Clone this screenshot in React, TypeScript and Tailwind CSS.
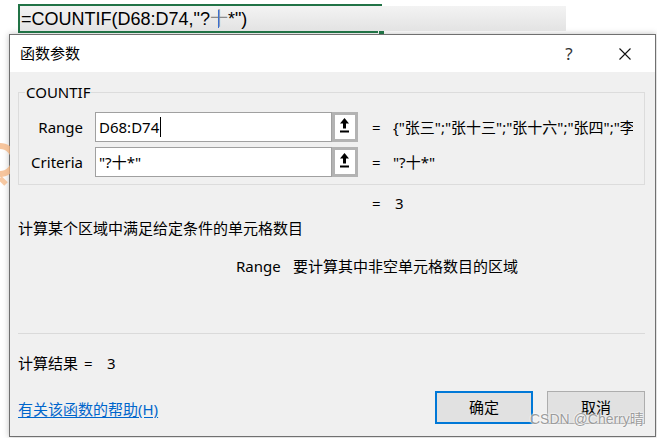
import React from "react";

function UpArrow() {
  return (
    <svg width="9" height="15" viewBox="0 0 9 15" className="block">
      <polygon points="4.5,0 9,5.5 6,5.5 6,10.5 3,10.5 3,5.5 0,5.5" fill="#000" />
      <rect x="0" y="12.5" width="9" height="2" fill="#000" />
    </svg>
  );
}

function RefButton() {
  return (
    <div className="w-[26px] h-[30px] border-[3px] border-[#b3b3b3] bg-white flex items-center justify-center pr-[2px] pb-[4px]">
      <UpArrow />
    </div>
  );
}

export default function App() {
  return (
    <div className="relative w-[657px] h-[438px] bg-white overflow-hidden text-black text-[15px] font-['Noto_Sans','Noto_Sans_CJK_SC',sans-serif]">
      {/* orange watermark fragment on the left */}
      <svg className="absolute left-0 top-[140px]" width="10" height="50" viewBox="0 0 10 50">
        <path d="M0 6 A 12 12 0 0 1 0 34" stroke="#f3b27c" strokeWidth="6" fill="none" opacity="0.75" />
        <path d="M0 38 L6 44" stroke="#f3b27c" strokeWidth="5" fill="none" opacity="0.7" />
      </svg>

      {/* Excel formula bar */}
      <div className="h-[34px] pl-[18px] pt-[4px]">
        <div className="flex flex-col border-l-2 border-[#217346] w-[548px]">
          <div className="h-[2px] w-[362px] bg-[#217346]" />
          <div className="h-[25px] w-[546px] bg-gradient-to-b from-[#f3f3f3] to-[#e3e3e3] flex items-center pl-[1px] text-[18px] leading-none font-['Liberation_Sans','Noto_Sans_CJK_SC',sans-serif]">
            <span>=COUNTIF(D68:D74,"?</span>
            <span className="relative text-[#8a8a8a]">
              十
              <span className="absolute left-[8px] top-[0px] bottom-[0px] w-px bg-[#3a6fd0]" />
            </span>
            <span>*")</span>
          </div>
          <div className="flex h-[2px]">
            <div className="w-[358px] bg-[#217346]" />
            <div className="w-[5px] h-[3px] ml-[1px] bg-[#217346]" />
          </div>
        </div>
      </div>

      {/* Dialog */}
      <div className="ml-[9px] w-[647px] h-[403px] border border-[#707070] bg-[#f0f0f0] flex flex-col shadow-[0_0_6px_rgba(0,0,0,0.25)]">
        {/* title bar */}
        <div className="h-[37px] bg-white flex items-center pl-[10px] shrink-0">
          <span className="text-[15px]">函数参数</span>
          <span className="ml-auto w-[16px] text-center text-[17px] text-[#333]">?</span>
          <svg className="ml-[42px] mr-[24px]" width="12" height="12" viewBox="0 0 12 12">
            <path d="M0.5 0.5 L11.5 11.5 M11.5 0.5 L0.5 11.5" stroke="#111" strokeWidth="1.1" />
          </svg>
        </div>

        {/* body */}
        <div className="flex flex-col pl-[8px] pr-[10px]">
          {/* group box */}
          <div className="relative mt-[20px] h-[93px] border border-[#dcdcdc] pt-[19px]">
            <span className="absolute left-[6px] top-[-11px] px-[1px] leading-[20px] bg-[#f0f0f0]">COUNTIF</span>

            <div className="flex items-center h-[30px]">
              <span className="w-[64px] text-right">Range</span>
              <div className="ml-[12px] w-[237px] h-[30px] border border-[#a0a0a0] bg-white pl-[3px] flex items-center">
                <span>D68:D74</span>
                <span className="w-px h-[20px] bg-black ml-[1px]" />
              </div>
              <RefButton />
              <span className="ml-[14px] w-[21px]">=</span>
              <span className="w-[240px] overflow-hidden whitespace-nowrap">{'{"张三";"张十三";"张十六";"张四";"李四"}'}</span>
            </div>

            <div className="flex items-center h-[30px] mt-[5px]">
              <span className="w-[64px] text-right">Criteria</span>
              <div className="ml-[12px] w-[237px] h-[30px] border border-[#a0a0a0] bg-white pl-[3px] flex items-center">
                <span>"?十*"</span>
              </div>
              <RefButton />
              <span className="ml-[14px] w-[21px]">=</span>
              <span className="whitespace-nowrap">"?十*"</span>
            </div>
          </div>

          <div className="flex items-center h-[20px] mt-[8px]">
            <span className="ml-[354px] w-[23px]">=</span>
            <span>3</span>
          </div>

          <div className="flex items-center h-[20px] mt-[5px]">
            <span>计算某个区域中满足给定条件的单元格数目</span>
          </div>

          <div className="flex items-center h-[20px] mt-[18px]">
            <span className="ml-[218px] w-[57px]">Range</span>
            <span>要计算其中非空单元格数目的区域</span>
          </div>

          <div className="mt-[57px] h-px bg-[#dadada]" />

          <div className="flex items-center h-[20px] mt-[19px]">
            <span className="w-[66px]">计算结果</span>
            <span className="w-[23px]">=</span>
            <span>3</span>
          </div>

          <div className="flex items-center h-[33px] mt-[18px]">
            <span className="mt-[3px] text-[#0066cc] underline underline-offset-[2px]">有关该函数的帮助(H)</span>
            <button className="ml-auto w-[98px] h-[33px] border-2 border-[#0078d7] bg-[#e1e1e1] flex items-center justify-center text-[15px]">
              确定
            </button>
            <button className="ml-[14px] w-[98px] h-[33px] border border-[#adadad] bg-[#e1e1e1] flex items-center justify-center text-[15px]">
              取消
            </button>
          </div>
        </div>
      </div>

      {/* CSDN watermark */}
      <span className="absolute left-[530px] top-[409px] text-[14px] leading-[20px] text-[#9c9c9c] whitespace-nowrap font-['Liberation_Sans','Noto_Sans_CJK_SC',sans-serif] [text-shadow:0_0_2px_#fff,0_0_2px_#fff]">
        CSDN @Cherry晴
      </span>
    </div>
  );
}
